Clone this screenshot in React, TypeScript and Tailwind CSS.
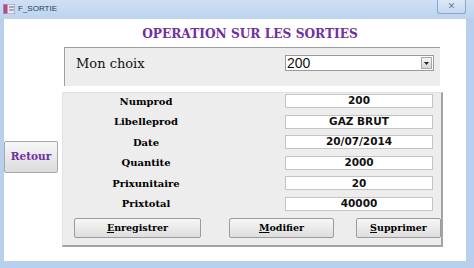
import React from "react"

const serif = "font-['DejaVu_Serif',serif]"

const fields = [
  { label: "Numprod", value: "200" },
  { label: "Libelleprod", value: "GAZ BRUT" },
  { label: "Date", value: "20/07/2014" },
  { label: "Quantite", value: "2000" },
  { label: "Prixunitaire", value: "20" },
  { label: "Prixtotal", value: "40000" },
]

function AccessButton({ first, rest, width, className = "" }: { first: string; rest: string; width: string; className?: string }) {
  return (
    <button
      className={`${width} h-[20px] rounded-[2px] border border-[#9c9c9c] bg-gradient-to-b from-[#f7f7f7] to-[#dedede] ${serif} text-[9.5px] font-bold text-black leading-none ${className}`}
    >
      <span className="underline">{first}</span>
      {rest}
    </button>
  )
}

export default function App() {
  return (
    <div className="w-[474px] h-[268px] bg-[#b9d0ec] flex flex-col overflow-hidden">
      {/* title bar */}
      <div className="h-[19px] flex items-start bg-gradient-to-b from-[#cfe0f4] to-[#bcd3ee]">
        <svg width="12" height="10" viewBox="0 0 12 10" className="ml-[3px] mt-[4px]">
          <rect x="0" y="0" width="12" height="10" fill="#e8e8f0" stroke="#8a8aa8" strokeWidth="1" />
          <rect x="0.5" y="0.5" width="4" height="9" fill="#b04a8a" />
          <line x1="6" y1="3" x2="11" y2="3" stroke="#6a6a8a" />
          <line x1="6" y1="6" x2="11" y2="6" stroke="#6a6a8a" />
        </svg>
        <span className="ml-[3px] mt-[4px] font-['Liberation_Sans',sans-serif] text-[8px] leading-[10px] text-[#1e3a5f]">
          F_SORTIE
        </span>
        <div className="ml-auto mr-[8px] w-[29px] h-[14px] rounded-b-[3px] border border-t-0 border-[#8aa6cc] bg-gradient-to-b from-[#dbe8f7] to-[#c6d9f0] flex items-center justify-center">
          <span className="font-['DejaVu_Sans',sans-serif] text-[9px] leading-none text-[#6b7d95]">✕</span>
        </div>
      </div>

      {/* client area */}
      <div className="ml-[4px] mr-[8px] mb-[7px] flex-1 bg-white flex">
        <div className="w-[58px] shrink-0">
          <button
            className={`mt-[122px] w-[54px] h-[32px] rounded-[2px] border border-[#a8a8a8] bg-gradient-to-b from-[#f7f7f7] to-[#dcdcdc] ${serif} text-[10.5px] font-bold text-[#7030a0]`}
          >
            Retour
          </button>
        </div>

        <div className="w-[382px] flex flex-col">
          <div className="h-[28px] pt-[1px] pr-[6px] text-center">
            <span className={`${serif} text-[12.2px] font-bold leading-[16px] text-[#7030a0]`}>
              OPERATION SUR LES SORTIES
            </span>
          </div>

          <div className="ml-[2px] w-[376px] h-[39px] bg-[#ededed] border-t border-l border-[#a0a0a0] flex items-start">
            <span className={`ml-[11px] mt-[8px] ${serif} text-[13px] leading-[16px] text-[#111]`}>Mon choix</span>
            <div className="ml-auto mr-[6px] mt-[7px] w-[149px] h-[16px] bg-white border border-[#9a9a9a] flex items-center">
              <span className="ml-[1px] font-['Liberation_Sans',sans-serif] text-[14px] leading-none text-[#111]">200</span>
              <div className="ml-auto mr-[1px] w-[11px] h-[12px] border border-[#a8a8a8] bg-gradient-to-b from-[#f4f4f4] to-[#d6d6d6] flex items-center justify-center">
                <svg width="5" height="3" viewBox="0 0 5 3">
                  <path d="M0 0 L5 0 L2.5 3 Z" fill="#222" />
                </svg>
              </div>
            </div>
          </div>

          <div className="mt-[6px] w-[381px] h-[155px] bg-[#ededed] border-r-2 border-b-2 border-[#a3a3a3] border-t border-l border-t-[#e2e2e2] border-l-[#e2e2e2] pt-[1px] flex flex-col">
            {fields.map((f) => (
              <div key={f.label} className="h-[20.6px] flex items-start">
                <div className={`w-[166px] h-[14px] flex items-center justify-center ${serif} text-[10px] font-bold text-black`}>
                  {f.label}
                </div>
                <div className="ml-[56px] w-[148px] h-[14px] bg-white border border-[#c4c4c4] flex items-center justify-center font-['DejaVu_Sans',sans-serif] text-[10.5px] font-bold text-[#111]">
                  {f.value}
                </div>
              </div>
            ))}
            <div className="flex items-start">
              <AccessButton first="E" rest="nregistrer" width="w-[127px]" className="ml-[11px]" />
              <AccessButton first="M" rest="odifier" width="w-[105px]" className="ml-[28px]" />
              <AccessButton first="S" rest="upprimer" width="w-[85px]" className="ml-[22px]" />
            </div>
          </div>
        </div>
      </div>
    </div>
  )
}
